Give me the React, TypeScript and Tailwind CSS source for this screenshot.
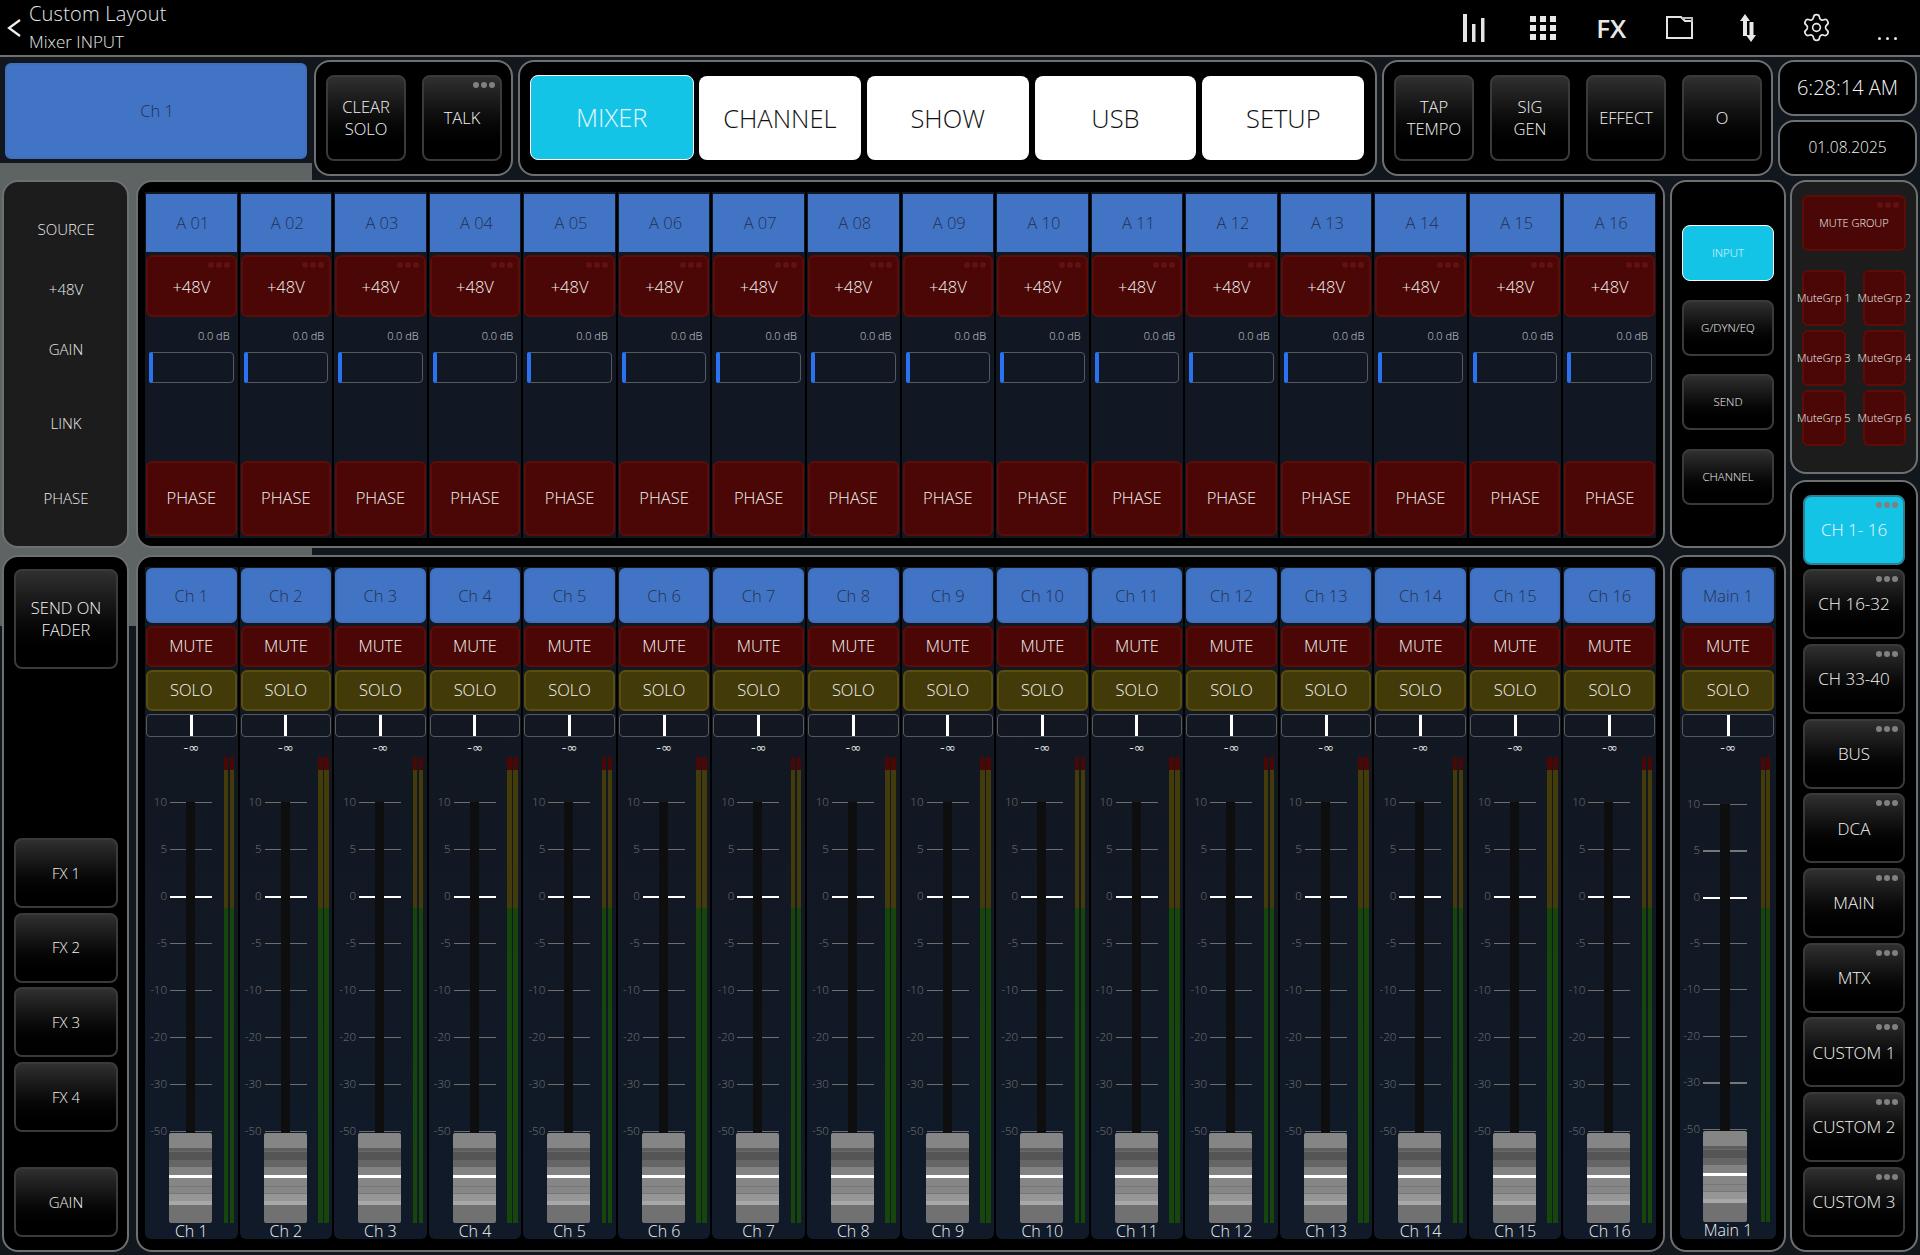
import React from "react";
import { Settings } from "lucide-react";

const FADER =
  "bg-[linear-gradient(to_bottom,#858585_0,#858585_15px,#5e5e5e_15px,#5e5e5e_18px,#6a6a6a_18px,#6a6a6a_19px,#555555_19px,#555555_27px,#666666_27px,#666666_34px,#828282_34px,#828282_42px,#ffffff_42px,#ffffff_45px,#868686_45px,#868686_53px,#777777_53px,#777777_54px,#868686_54px,#868686_60px,#777777_60px,#777777_61px,#969696_61px,#969696_68px,#a8a8a8_68px,#a8a8a8_72px,#717171_72px,#717171_100%)]";
const DARK = "bg-gradient-to-b from-[#303030] to-[#000000] border-2 border-[#3a3a3a] rounded-lg text-[#f4f4f4]";
const RED = "bg-[#4a0705] border-2 border-[#5e0c08] rounded-md text-[#f4f4f4]";
const PANEL = "border-2 border-[#6c7071] rounded-2xl";

const SCALE: [string, boolean][] = [
  ["10", false], ["5", false], ["0", true], ["-5", false], ["-10", false], ["-20", false], ["-30", false], ["-50", false],
];

function Dots({ color = "bg-[#808080]" }: { color?: string }) {
  return (
    <div className="absolute top-[5px] right-[5px] flex gap-[2px]">
      <span className={`w-[6px] h-[6px] rounded-full ${color}`} />
      <span className={`w-[6px] h-[6px] rounded-full ${color}`} />
      <span className={`w-[6px] h-[6px] rounded-full ${color}`} />
    </div>
  );
}

function DarkBtn({ children, dots, className = "" }: { children: React.ReactNode; dots?: boolean; className?: string }) {
  return (
    <div className={`relative flex items-center justify-center text-center ${DARK} ${className}`}>
      {children}
      {dots && <Dots />}
    </div>
  );
}

function Meter({ main }: { main?: boolean }) {
  const Bar = () => (
    <div className={main ? "w-[4px] flex flex-col" : "w-[4.5px] flex flex-col"}>
      <div className="h-[13px] bg-[#4a0705]" />
      <div className="h-[138px] bg-[#443b0a]" />
      <div className="flex-1 bg-[#16460b]" />
    </div>
  );
  return (
    <div className={main ? "flex gap-[1px]" : "flex gap-[1.5px]"}>
      <Bar />
      <Bar />
    </div>
  );
}

function FaderStrip({ name, label, main }: { name: string; label: string; main?: boolean }) {
  return (
    <div
      className={
        main
          ? "w-[96px] pt-[1px] px-[2px] rounded-b-md bg-gradient-to-b from-[#13171f] to-[#101a29] flex flex-col"
          : "pt-[1px] px-[1px] rounded-b-md bg-gradient-to-b from-[#13171f] to-[#101a29] flex flex-col"
      }
    >
      <div className="h-[55px] pt-[1px] rounded-md bg-[#4274c6] border-2 border-[#3f6fbe] flex items-center justify-center text-[16.5px] text-[#22314f]">
        {name}
      </div>
      <div className={`h-[41px] mt-[3px] flex items-center justify-center text-[16.5px] ${RED}`}>MUTE</div>
      <div className="h-[41px] mt-[3px] flex items-center justify-center text-[16.5px] rounded-md bg-[#433a0a] border-2 border-[#5a4d10] text-[#f4f4f4]">
        SOLO
      </div>
      <div className="h-[23px] mt-[3px] rounded-[4px] border border-[#555a5e] flex justify-center">
        <div className="w-[3px] bg-white" />
      </div>
      <div className="h-[20px] flex items-center justify-center text-[13px] leading-none font-normal text-[#e0e0e0] font-['DejaVu_Sans']">-∞</div>
      <div className={main ? "flex h-[465px]" : "flex h-[466px]"}>
        <div className={main ? "w-[79px] pt-[47px] flex flex-col" : "w-[77.5px] pt-[45px] flex flex-col"}>
          {SCALE.map(([t, zero]) => {
            const thick = main && (t === "5" || t === "-30");
            const last = t === "-50";
            const tick = zero ? "h-[2px] bg-white" : thick ? "h-[2px] bg-[#777777]" : "h-px bg-[#6e6e6e]";
            return (
              <div key={t} className={last ? "h-[2px] flex items-start" : main ? "h-[46.6px] flex items-start" : "h-[47px] flex items-start"}>
                <span className={main ? "w-[21px] pr-[3px] -mt-[7px] text-right text-[11.5px] leading-[14px] text-[#757575]" : "w-[24px] pr-[3px] -mt-[7px] text-right text-[11.5px] leading-[14px] text-[#757575]"}>
                  {t}
                </span>
                <div className={`${main ? "w-[17px]" : "w-[16px]"} ${tick}`} />
                <div className={main ? "w-[10px] self-stretch bg-[#0e0e0e]" : "w-[9px] self-stretch bg-[#0e0e0e]"} />
                <div className={`w-[17px] ${tick}`} />
              </div>
            );
          })}
          <div className={main ? `ml-[21px] w-[44px] h-[92px] rounded-[2px] ${FADER}` : `ml-[23px] w-[43px] h-[90px] rounded-[2px] ${FADER}`} />
        </div>
        <Meter main={main} />
      </div>
      <div className="h-[16px] flex items-center justify-center text-[16px] leading-none text-[#f4f4f4]">{label}</div>
    </div>
  );
}

function InputStrip({ name }: { name: string }) {
  return (
    <div className="pt-[2px] px-[1px] pb-[2px] bg-[#111824] flex flex-col">
      <div className="h-[58px] pl-[3px] bg-[#4274c6] flex items-center justify-center text-[16.5px] text-[#22314f]">{name}</div>
      <div className={`relative h-[62px] mt-[3px] pt-[2px] flex items-center justify-center text-[16.5px] ${RED}`}>
        +48V
        <Dots color="bg-[#621210]" />
      </div>
      <div className="h-[35px] pt-[12px] pr-[7px] text-right text-[11px] leading-[14px] text-[#d4d4d4]">0.0 dB</div>
      <div className="h-[31px] mx-[3px] rounded-[4px] border border-[#555a5e] flex">
        <div className="w-[4px] -my-[1px] -ml-[1px] bg-[#2a72f0] rounded-[2px]" />
      </div>
      <div className={`h-[75px] mt-auto flex items-center justify-center text-[16.5px] ${RED}`}>PHASE</div>
    </div>
  );
}

function Header() {
  return (
    <div className="h-[57px] shrink-0 bg-black border-b-2 border-[#6c7071] flex items-center text-[#e8e8e8]">
      <svg width="14" height="18" viewBox="0 0 14 18" className="ml-[7px] shrink-0" fill="none" stroke="#f0f0f0" strokeWidth="2.2">
        <path d="M13 1 L2 9 L13 17" />
      </svg>
      <div className="ml-[8px] flex flex-col">
        <span className="text-[20px] leading-[28px] tracking-[0.2px]">Custom Layout</span>
        <span className="text-[17px] leading-[28px]">Mixer INPUT</span>
      </div>
      <div className="ml-auto -mr-[3px] flex items-center">
        <div className="w-[68.5px] flex justify-center">
          <svg width="22" height="28" viewBox="0 0 22 28" fill="#e4e4e4">
            <rect x="0" y="0" width="4" height="28" />
            <rect x="9" y="10" width="3.5" height="18" />
            <rect x="18" y="4" width="3.5" height="24" />
          </svg>
        </div>
        <div className="w-[68.5px] flex justify-center">
          <svg width="26" height="24" viewBox="0 0 26 24" fill="#e8e8e8">
            <rect x="0" y="0" width="6" height="6" />
            <rect x="10" y="0" width="6" height="6" />
            <rect x="20" y="0" width="6" height="6" />
            <rect x="0" y="9" width="6" height="6" />
            <rect x="10" y="9" width="6" height="6" />
            <rect x="20" y="9" width="6" height="6" />
            <rect x="0" y="18" width="6" height="6" />
            <rect x="10" y="18" width="6" height="6" />
            <rect x="20" y="18" width="6" height="6" />
          </svg>
        </div>
        <div className="w-[68.5px] text-center text-[26px] leading-none font-semibold text-[#e8e8e8]">FX</div>
        <div className="w-[68.5px] flex justify-center">
          <svg width="27" height="23" viewBox="0 0 27 23" fill="none" stroke="#e4e4e4" strokeWidth="2">
            <path d="M1 1 H15 L19 5 H26 V22 H1 Z" />
            <path d="M16 2 H26 V6" strokeWidth="2" stroke="#bdbdbd" />
          </svg>
        </div>
        <div className="w-[68.5px] flex justify-center">
          <svg width="18" height="28" viewBox="0 0 18 28" fill="#e8e8e8">
            <path d="M6 0 L11 7 H8 V22 H4 V7 H1 Z" />
            <path d="M12 28 L17 21 H14.5 V8 H10.5 V21 H7 Z" />
          </svg>
        </div>
        <div className="w-[68.5px] flex justify-center">
          <Settings size={31} strokeWidth={1.3} color="#e8e8e8" />
        </div>
        <div className="w-[72px] flex justify-center gap-[5px] pt-[22px]">
          <span className="w-[3px] h-[3px] rounded-full bg-[#e8e8e8]" />
          <span className="w-[3px] h-[3px] rounded-full bg-[#e8e8e8]" />
          <span className="w-[3px] h-[3px] rounded-full bg-[#e8e8e8]" />
        </div>
      </div>
    </div>
  );
}

function TopRow() {
  const nav = ["CHANNEL", "SHOW", "USB", "SETUP"];
  return (
    <div className="h-[116px] mt-[3px] shrink-0 flex">
      <div className="ml-[5px] mt-[3px] w-[302px] h-[96px] rounded-md bg-[#4274c6] border-2 border-[#3f6fbe] flex items-center justify-center text-[16.5px] text-[#22314f]">
        <span className="ml-[2px]">Ch 1</span>
      </div>
      <div className={`ml-[7px] w-[199px] ${PANEL} bg-black pt-[13px] pl-[10px] flex gap-[16px]`}>
        <DarkBtn className="w-[80px] h-[86px] text-[16.5px] leading-[22px]">
          CLEAR
          <br />
          SOLO
        </DarkBtn>
        <DarkBtn dots className="w-[80px] h-[86px] text-[16.5px]">TALK</DarkBtn>
      </div>
      <div className={`ml-[5px] w-[859px] ${PANEL} bg-black pt-[13px] pl-[10px] flex gap-[6px]`}>
        <div className="w-[163.5px] -mr-[0.5px] h-[85px] rounded-lg bg-[#14c4e6] border border-white flex items-center justify-center text-[25.5px] text-[#e6f7fb]">
          MIXER
        </div>
        {nav.map((n) => (
          <div key={n} className="w-[161.8px] h-[84px] mt-[1px] rounded-lg bg-white flex items-center justify-center text-[25.5px] text-[#111111]">
            {n}
          </div>
        ))}
      </div>
      <div className={`ml-[5px] w-[391px] ${PANEL} bg-black pt-[13px] pl-[10px] flex gap-[16px]`}>
        <DarkBtn className="w-[80px] h-[86px] text-[16.5px] leading-[22px]">
          TAP
          <br />
          TEMPO
        </DarkBtn>
        <DarkBtn className="w-[80px] h-[86px] text-[16.5px] leading-[22px]">
          SIG
          <br />
          GEN
        </DarkBtn>
        <DarkBtn className="w-[80px] h-[86px] text-[16.5px]">EFFECT</DarkBtn>
        <DarkBtn className="w-[80px] h-[86px] text-[16.5px]">O</DarkBtn>
      </div>
      <div className="ml-[5px] w-[139px] flex flex-col gap-[4px]">
        <div className={`h-[56px] ${PANEL} bg-black flex items-center justify-center text-[20px] text-[#f4f4f4]`}>6:28:14 AM</div>
        <div className={`h-[56px] ${PANEL} bg-black flex items-center justify-center text-[15.5px] text-[#f4f4f4]`}>01.08.2025</div>
      </div>
    </div>
  );
}

const LABEL = "flex items-center justify-center pl-[1px] text-[15px] text-[#ececec]";

export default function App() {
  const ids = Array.from({ length: 16 }, (_, i) => i + 1);
  const mutes = ["MuteGrp 1", "MuteGrp 2", "MuteGrp 3", "MuteGrp 4", "MuteGrp 5", "MuteGrp 6"];
  const banks = ["CH 16-32", "CH 33-40", "BUS", "DCA", "MAIN", "MTX", "CUSTOM 1", "CUSTOM 2", "CUSTOM 3"];
  return (
    <div
      className="w-[1920px] h-[1255px] overflow-hidden flex flex-col font-[350] bg-[#12171d] bg-[linear-gradient(#5e6364,#5e6364)] bg-no-repeat bg-[size:312px_463px] bg-[position:0_163px]"
      style={{ fontFamily: '"Open Sans", "Noto Sans", sans-serif' }}
    >
      <Header />
      <TopRow />
      <div className="mt-[4px] flex">
        <div className="ml-[2px] w-[1784px] flex flex-col gap-[7px]">
          <div className="flex h-[368px]">
            <div className={`w-[127px] ${PANEL} bg-[#1c1c1c] pt-[17px] flex flex-col`}>
              <div className={`h-[60px] ${LABEL}`}>SOURCE</div>
              <div className={`h-[60px] ${LABEL}`}>+48V</div>
              <div className={`h-[60px] ${LABEL}`}>GAIN</div>
              <div className={`h-[60px] mt-[14px] ${LABEL}`}>LINK</div>
              <div className={`h-[60px] mt-[15px] ${LABEL}`}>PHASE</div>
            </div>
            <div className={`ml-[7px] w-[1529px] ${PANEL} bg-black pt-[10px] pb-[8px] pl-[7px] pr-[7px] grid grid-cols-16 gap-[2px]`}>
              {ids.map((i) => (
                <InputStrip key={i} name={`A ${String(i).padStart(2, "0")}`} />
              ))}
            </div>
            <div className={`ml-[5px] w-[116px] ${PANEL} bg-black pt-[43px] px-[10px] flex flex-col gap-[18.5px]`}>
              <div className="h-[56px] rounded-lg bg-[#14c4e6] border border-white flex items-center justify-center text-[11.5px] text-[#e6f7fb]">INPUT</div>
              <DarkBtn className="h-[56px] text-[11.5px]">G/DYN/EQ</DarkBtn>
              <DarkBtn className="h-[56px] text-[11.5px]">SEND</DarkBtn>
              <DarkBtn className="h-[56px] text-[11.5px]">CHANNEL</DarkBtn>
            </div>
          </div>
          <div className="flex h-[697px]">
            <div className={`w-[127px] ${PANEL} bg-black pt-[12px] pl-[10px] pr-[9px] flex flex-col`}>
              <DarkBtn className="h-[100px] text-[16.5px] leading-[22px]">
                SEND ON
                <br />
                FADER
              </DarkBtn>
              <div className="mt-[169px] flex flex-col gap-[4.7px]">
                {["FX 1", "FX 2", "FX 3", "FX 4"].map((f) => (
                  <DarkBtn key={f} className="h-[70px] text-[15px]">{f}</DarkBtn>
                ))}
              </div>
              <DarkBtn className="h-[70px] mt-[35px] text-[15px]">GAIN</DarkBtn>
            </div>
            <div className={`ml-[7px] w-[1529px] ${PANEL} bg-black pt-[10px] pb-[11px] pl-[7px] pr-[7px] grid grid-cols-16 gap-[2px]`}>
              {ids.map((i) => (
                <FaderStrip key={i} name={`Ch ${i}`} label={`Ch ${i}`} />
              ))}
            </div>
            <div className={`ml-[5px] w-[116px] ${PANEL} bg-black pt-[10px] pb-[11px] pl-[8px] flex`}>
              <FaderStrip main name="Main 1" label="Main 1" />
            </div>
          </div>
        </div>
        <div className="ml-[4px] w-[128px] flex flex-col gap-[6px]">
          <div className={`h-[294px] ${PANEL} bg-[#1c1c1c] pt-[13px] px-[10px]`}>
            <div className={`relative h-[56px] ${RED} flex items-center justify-center text-[11px]`}>
              MUTE GROUP
              <Dots color="bg-[#621210]" />
            </div>
            <div className="mt-[19px] grid grid-cols-2 gap-x-[17px] gap-y-[4px]">
              {mutes.map((m) => (
                <div key={m} className={`h-[56px] ${RED} flex items-center justify-center text-[11px] whitespace-nowrap`}>
                  {m}
                </div>
              ))}
            </div>
          </div>
          <div className={`h-[772px] ${PANEL} bg-black pt-[12.5px] px-[11px] flex flex-col gap-[4.7px]`}>
            <div className="relative h-[70px] rounded-lg bg-[#14c4e6] border-2 border-[#2f7f92] flex items-center justify-center text-[17px] text-[#eefafd]">
              CH 1- 16
              <Dots />
            </div>
            {banks.map((b) => (
              <DarkBtn key={b} dots className="h-[70px] text-[17px]">{b}</DarkBtn>
            ))}
          </div>
        </div>
      </div>
    </div>
  );
}
